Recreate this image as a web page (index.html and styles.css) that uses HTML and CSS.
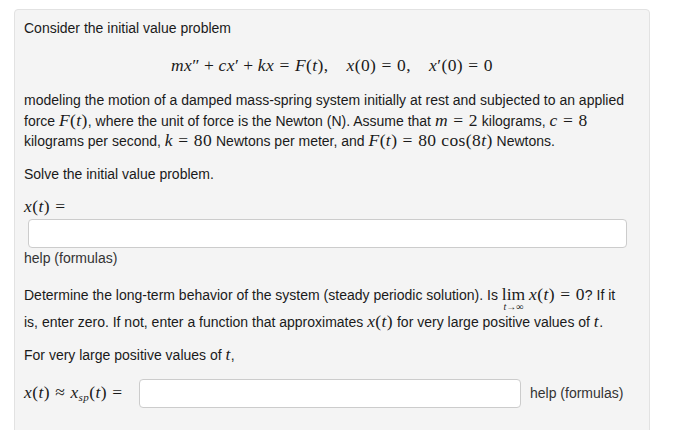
FILE: index.html
```html
<!DOCTYPE html>
<html>
<head>
<meta charset="utf-8">
<link rel="stylesheet" href="styles.css">
</head>
<body>
<div class="panel">
  <p class="p">Consider the initial value problem</p>
  <div class="display"><span class="mi">mx</span><span class="mn">″</span><span class="mo bin">+</span><span class="mi">cx</span><span class="mn">′</span><span class="mo bin">+</span><span class="mi">kx</span><span class="mo rel">=</span><span class="mi">F</span><span class="mn">(</span><span class="mi">t</span><span class="mn">),</span><span class="quad"></span><span class="mi">x</span><span class="mn">(0)</span><span class="mo rel">=</span><span class="mn">0,</span><span class="quad"></span><span class="mi">x</span><span class="mn">′(0)</span><span class="mo rel">=</span><span class="mn">0</span></div>
  <p class="p">modeling the motion of a damped mass-spring system initially at rest and subjected to an applied force <span class="mi">F</span><span class="mn">(</span><span class="mi">t</span><span class="mn">)</span>, where the unit of force is the Newton (N). Assume that <span class="mi">m</span><span class="mo rel">=</span><span class="mn">2</span> kilograms, <span class="mi">c</span><span class="mo rel">=</span><span class="mn">8</span> kilograms per second, <span class="mi">k</span><span class="mo rel">=</span><span class="mn">80</span> Newtons per meter, and <span class="mi">F</span><span class="mn">(</span><span class="mi">t</span><span class="mn">)</span><span class="mo rel">=</span><span class="mn">80 cos(8</span><span class="mi">t</span><span class="mn">)</span> Newtons.</p>
  <p class="p gap">Solve the initial value problem.</p>
  <div class="label"><span class="mi">x</span><span class="mn">(</span><span class="mi">t</span><span class="mn">)</span><span class="mo rel">=</span></div>
  <div class="input wide"></div>
  <div class="help">help (formulas)</div>
  <p class="p det">Determine the long-term behavior of the system (steady periodic solution). Is <span class="lim"><span class="limw">lim</span><span class="sub">t→∞</span></span> <span class="mi">x</span><span class="mn">(</span><span class="mi">t</span><span class="mn">)</span><span class="mo rel">=</span><span class="mn">0</span>? If it is, enter zero. If not, enter a function that approximates <span class="mi">x</span><span class="mn">(</span><span class="mi">t</span><span class="mn">)</span> for very large positive values of <span class="mi">t</span>.</p>
  <p class="p for">For very large positive values of <span class="mi">t</span>,</p>
  <div class="row">
    <div class="rowlabel"><span class="mi">x</span><span class="mn">(</span><span class="mi">t</span><span class="mn">)</span><span class="mo rel">≈</span><span class="mi">x<span class="s">sp</span></span><span class="mn">(</span><span class="mi">t</span><span class="mn">)</span><span class="mo rel last">=</span></div>
    <div class="input short"></div>
    <div class="help inline">help (formulas)</div>
  </div>
</div>
</body>
</html>
```

FILE: styles.css
```css
html, body {
  margin: 0;
  padding: 0;
  background: #ffffff;
}
body {
  font-family: "Liberation Sans", Arial, sans-serif;
  font-size: 14px;
  color: #1a1a1a;
}
.panel {
  margin: 9px 0 0 14px;
  width: 636px;
  height: 440px;
  background: #f4f4f4;
  border: 1px solid #e2e2e2;
  border-radius: 4px;
  padding: 8px 0 0 9px;
  box-sizing: border-box;
}
.p {
  margin: 0;
  line-height: 20.5px;
  width: 614px;
}
.mi, .mn, .mo, .limw {
  font-family: "Liberation Serif", "Times New Roman", serif;
  font-size: 17.5px;
  line-height: 1;
  letter-spacing: 0.4px;
}
.mi {
  font-style: italic;
}
.mo.bin {
  margin: 0 0.24em;
}
.mo.rel {
  margin: 0 0.3em;
}
.mo.last {
  margin-right: 0;
}
.quad {
  display: inline-block;
  width: 18px;
}
.display {
  text-align: center;
  width: 616px;
  line-height: 20px;
  margin: 17.5px 0 14px 0;
  white-space: nowrap;
}
.gap {
  margin-top: 12.5px;
}
.label {
  margin-top: 12.75px;
  line-height: 20px;
}
.input {
  background: #ffffff;
  border: 1px solid #cccccc;
  border-radius: 4px;
  height: 29px;
  box-sizing: border-box;
}
.wide {
  width: 599px;
  margin: 2px 0 0 4px;
}
.help {
  color: #333333;
  line-height: 20px;
}
.p.det {
  margin-top: 15px;
  line-height: 24px;
  width: 604px;
}
.lim {
  display: inline-flex;
  flex-direction: column;
  align-items: center;
  vertical-align: baseline;
  line-height: 1;
}
.limw {
  line-height: 17px;
  letter-spacing: 0;
}
.sub {
  font-family: "Liberation Serif", serif;
  font-style: italic;
  font-size: 10px;
  line-height: 7px;
}
.s {
  font-size: 11px;
  vertical-align: -3px;
}
.p.for {
  margin-top: 11px;
}
.row {
  display: flex;
  align-items: center;
  margin-top: 13px;
  width: 616px;
}
.rowlabel {
  line-height: 20px;
  white-space: nowrap;
  width: 115px;
  flex: none;
}
.short {
  width: 382px;
  flex: none;
}
.help.inline {
  margin-left: 9px;
}
```
